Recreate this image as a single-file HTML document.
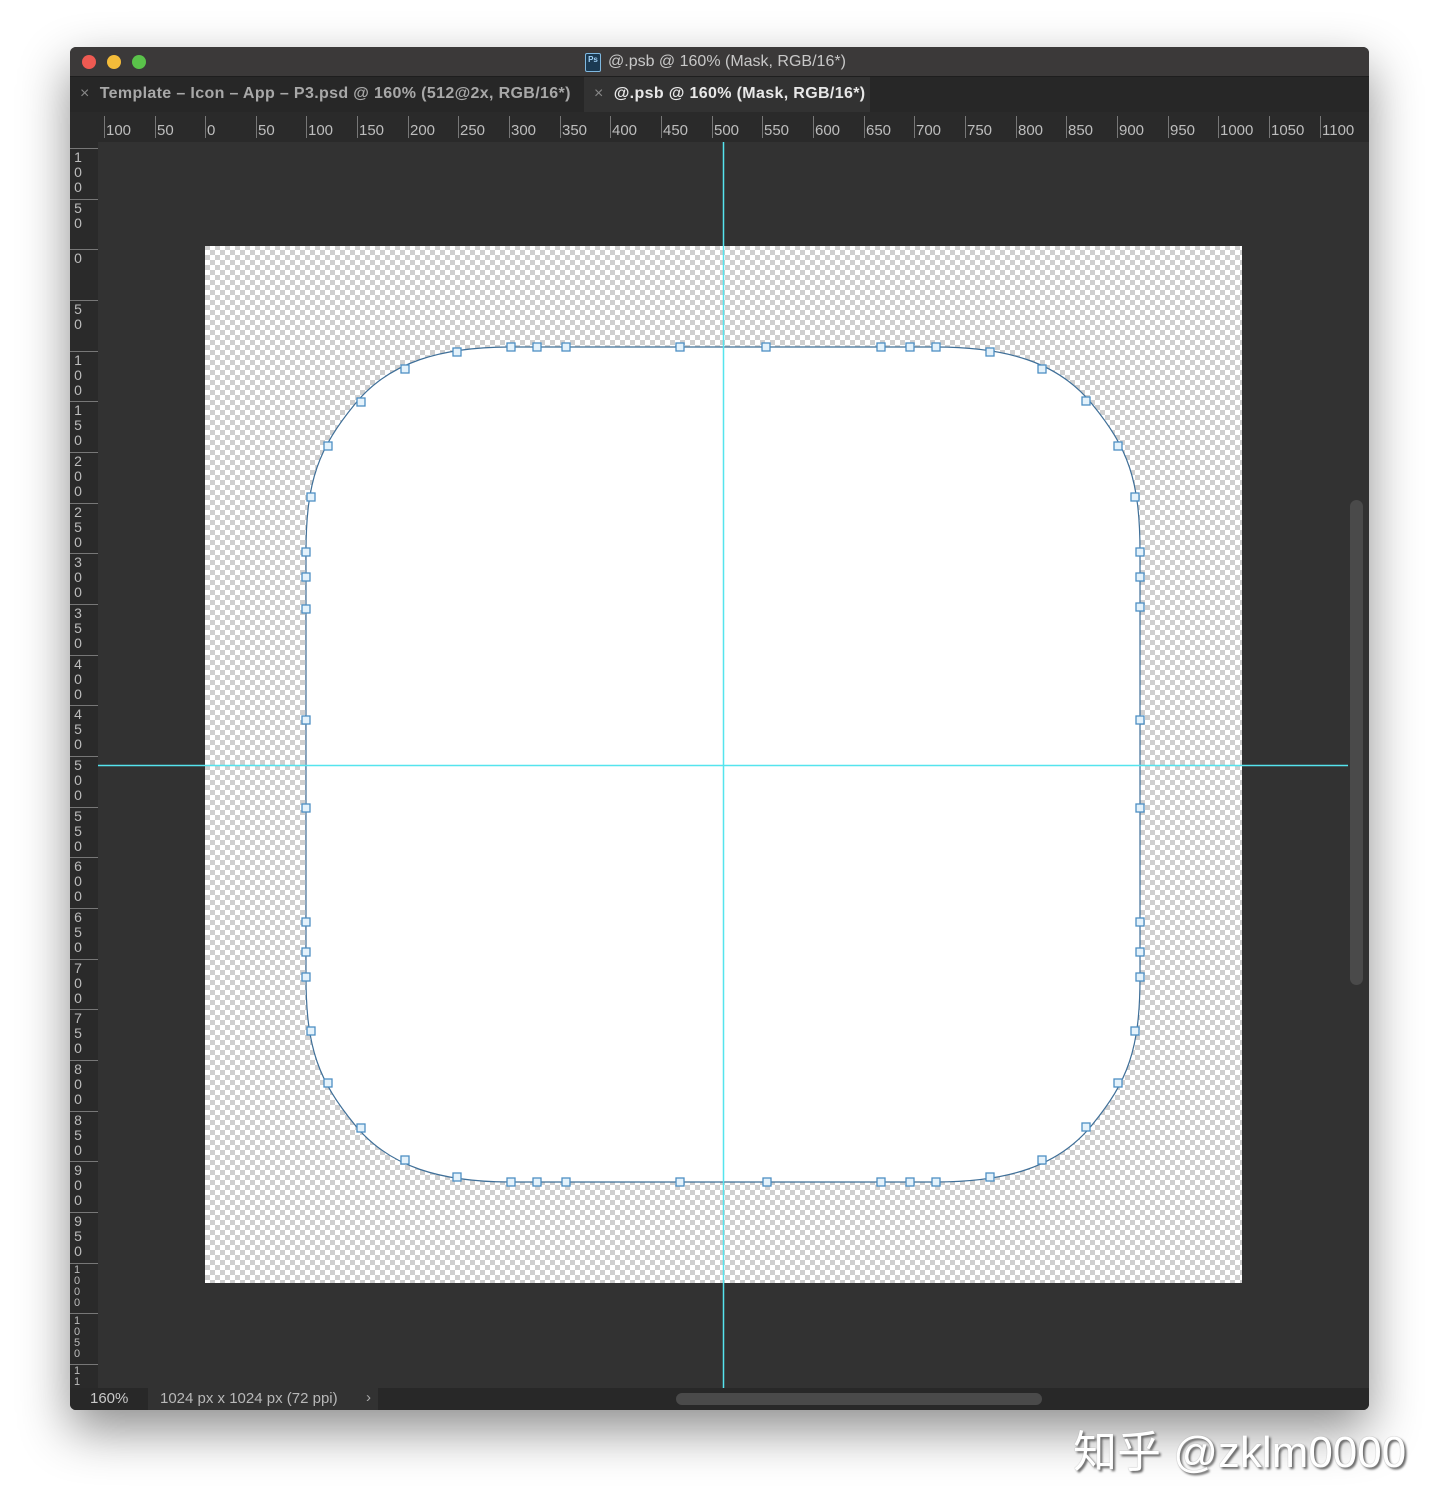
<!DOCTYPE html>
<html><head><meta charset="utf-8"><style>
body{margin:0;width:1440px;height:1504px;background:#fff;position:relative;overflow:hidden;font-family:"Liberation Sans",sans-serif}
.win{position:absolute;left:70px;top:47px;width:1299px;height:1363px;background:#323232;border-radius:6px;box-shadow:0 20px 50px rgba(0,0,0,.45);overflow:hidden}
.title{position:absolute;left:0;top:0;width:100%;height:29px;background:#3b3939;border-bottom:1px solid #1e1e1e}
.dot{position:absolute;top:8px;width:14px;height:14px;border-radius:50%}
.ttxt{position:absolute;left:538px;top:6px;color:#c8c8c8;font-size:16px}
.tabs{position:absolute;left:0;top:30px;width:100%;height:35px;background:#272727}
.tab{position:absolute;top:0;height:35px;line-height:33px;font-size:16px;font-weight:bold;color:#a8a8a8;white-space:nowrap;letter-spacing:0.35px}
.ruler{position:absolute;left:0;top:65px;width:100%;height:30px;background:#2a2a2a}
.lruler{position:absolute;left:0;top:95px;width:28px;height:1246px;background:#2a2a2a}
.status{position:absolute;left:0;bottom:0;width:100%;height:22px;background:#282828;color:#c8c8c8;font-size:15px}
</style></head><body>
<div class="win">
 <div class="title">
  <div class="dot" style="left:12px;background:#ee5a52"></div>
  <div class="dot" style="left:37px;background:#f4bc3a"></div>
  <div class="dot" style="left:62px;background:#5ac24a"></div>
  <div style="position:absolute;left:515px;top:6px;width:14px;height:17px;background:#1b3a52;border:1px solid #7fb8e0;border-radius:2px;color:#9fd0f5;font-size:8px;font-weight:bold;text-align:center;line-height:12px">Ps</div>
  <div class="ttxt">@.psb @ 160% (Mask, RGB/16*)</div>
 </div>
 <div class="tabs">
  <div class="tab" style="left:10px"><span style="font-weight:normal;color:#888;margin-right:10px">×</span>Template – Icon – App – P3.psd @ 160% (512@2x, RGB/16*)</div>
  <div class="tab" style="left:514px;width:286px;background:#323232;color:#e8e8e8;padding-left:10px;box-sizing:border-box"><span style="font-weight:normal;color:#888;margin-right:10px">×</span>@.psb @ 160% (Mask, RGB/16*)</div>
 </div>
 <div class="ruler"></div>
 <div class="lruler"></div>
 <div class="status"><span style="position:absolute;left:20px;top:2px">160%</span><div style="position:absolute;left:78px;top:0;width:230px;height:22px;background:#323232"></div><span style="position:absolute;left:90px;top:2px;color:#b8b8b8">1024 px x 1024 px (72 ppi)</span><span style="position:absolute;left:296px;top:1px;color:#aaa">›</span>
 <div style="position:absolute;left:606px;top:5px;width:366px;height:12px;border-radius:6px;background:#4a4a4a"></div></div>
 <div style="position:absolute;left:1280px;top:453px;width:13px;height:485px;border-radius:7px;background:#4a4a4a"></div>
</div>
<svg width="1440" height="1504" style="position:absolute;left:0;top:0">
<defs><pattern id="ck" width="10" height="10" patternUnits="userSpaceOnUse"><rect width="10" height="10" fill="#fff"/><rect width="5" height="5" fill="#cfcfcf"/><rect x="5" y="5" width="5" height="5" fill="#cfcfcf"/></pattern></defs>
<rect x="205" y="246" width="1037" height="1037" fill="url(#ck)"/>
<path d="M511,347 L936,347 C1006,347 1058,362 1092,404 C1128,448 1140,480 1140,552 L1140,977 C1140,1049 1128,1081 1092,1125 C1058,1167 1006,1182 936,1182 L511,1182 C441,1182 389,1167 355,1125 C319,1081 306,1049 306,977 L306,552 C306,480 319,448 355,404 C389,362 441,347 511,347 Z" fill="#fff" stroke="#3f6f98" stroke-width="1.2"/>
<line x1="723.5" y1="142" x2="723.5" y2="1388" stroke="#55e4ee" stroke-width="1.5"/>
<line x1="98" y1="765.5" x2="1348" y2="765.5" stroke="#55e4ee" stroke-width="1.5"/>
<g fill="#e4f2fb" stroke="#4d8fc4" stroke-width="1.3">
<rect x="453" y="348" width="8" height="8"/><rect x="507" y="343" width="8" height="8"/><rect x="533" y="343" width="8" height="8"/><rect x="562" y="343" width="8" height="8"/><rect x="676" y="343" width="8" height="8"/><rect x="762" y="343" width="8" height="8"/><rect x="877" y="343" width="8" height="8"/><rect x="906" y="343" width="8" height="8"/><rect x="932" y="343" width="8" height="8"/><rect x="986" y="348" width="8" height="8"/><rect x="1038" y="365" width="8" height="8"/><rect x="1082" y="397" width="8" height="8"/><rect x="1114" y="442" width="8" height="8"/><rect x="1131" y="493" width="8" height="8"/><rect x="1136" y="548" width="8" height="8"/><rect x="1136" y="573" width="8" height="8"/><rect x="1136" y="603" width="8" height="8"/><rect x="1136" y="716" width="8" height="8"/><rect x="1136" y="804" width="8" height="8"/><rect x="1136" y="918" width="8" height="8"/><rect x="1136" y="948" width="8" height="8"/><rect x="1136" y="973" width="8" height="8"/><rect x="1131" y="1027" width="8" height="8"/><rect x="1114" y="1079" width="8" height="8"/><rect x="1082" y="1123" width="8" height="8"/><rect x="1038" y="1156" width="8" height="8"/><rect x="986" y="1173" width="8" height="8"/><rect x="932" y="1178" width="8" height="8"/><rect x="906" y="1178" width="8" height="8"/><rect x="877" y="1178" width="8" height="8"/><rect x="763" y="1178" width="8" height="8"/><rect x="676" y="1178" width="8" height="8"/><rect x="562" y="1178" width="8" height="8"/><rect x="533" y="1178" width="8" height="8"/><rect x="507" y="1178" width="8" height="8"/><rect x="453" y="1173" width="8" height="8"/><rect x="401" y="1156" width="8" height="8"/><rect x="357" y="1124" width="8" height="8"/><rect x="324" y="1079" width="8" height="8"/><rect x="307" y="1027" width="8" height="8"/><rect x="302" y="973" width="8" height="8"/><rect x="302" y="948" width="8" height="8"/><rect x="302" y="918" width="8" height="8"/><rect x="302" y="804" width="8" height="8"/><rect x="302" y="716" width="8" height="8"/><rect x="302" y="605" width="8" height="8"/><rect x="302" y="573" width="8" height="8"/><rect x="302" y="548" width="8" height="8"/><rect x="307" y="493" width="8" height="8"/><rect x="324" y="442" width="8" height="8"/><rect x="357" y="398" width="8" height="8"/><rect x="401" y="365" width="8" height="8"/>
</g>
<g fill="#bdbdbd" font-family="Liberation Sans" font-size="15">
<text x="106" y="135">100</text><text x="157" y="135">50</text><text x="207" y="135">0</text><text x="258" y="135">50</text><text x="308" y="135">100</text><text x="359" y="135">150</text><text x="410" y="135">200</text><text x="460" y="135">250</text><text x="511" y="135">300</text><text x="562" y="135">350</text><text x="612" y="135">400</text><text x="663" y="135">450</text><text x="714" y="135">500</text><text x="764" y="135">550</text><text x="815" y="135">600</text><text x="866" y="135">650</text><text x="916" y="135">700</text><text x="967" y="135">750</text><text x="1018" y="135">800</text><text x="1068" y="135">850</text><text x="1119" y="135">900</text><text x="1170" y="135">950</text><text x="1220" y="135">1000</text><text x="1271" y="135">1050</text><text x="1322" y="135">1100</text>
</g>
<g stroke="#777" stroke-width="1">
<path d="M104.5 116V138M155.5 116V138M205.5 116V138M256.5 116V138M306.5 116V138M357.5 116V138M408.5 116V138M458.5 116V138M509.5 116V138M560.5 116V138M610.5 116V138M661.5 116V138M712.5 116V138M762.5 116V138M813.5 116V138M864.5 116V138M914.5 116V138M965.5 116V138M1016.5 116V138M1066.5 116V138M1117.5 116V138M1168.5 116V138M1218.5 116V138M1269.5 116V138M1320.5 116V138"/>
<path d="M70 148.5H98M70 199.5H98M70 249.5H98M70 300.5H98M70 351.5H98M70 401.5H98M70 452.5H98M70 503.5H98M70 553.5H98M70 604.5H98M70 655.5H98M70 705.5H98M70 756.5H98M70 807.5H98M70 857.5H98M70 908.5H98M70 959.5H98M70 1009.5H98M70 1060.5H98M70 1111.5H98M70 1161.5H98M70 1212.5H98M70 1263.5H98M70 1313.5H98M70 1364.5H98"/>
</g>
<g fill="#bdbdbd" font-family="Liberation Sans" font-size="14" text-anchor="middle">
<text x="78" y="162">1</text><text x="78" y="177">0</text><text x="78" y="192">0</text>
<text x="78" y="213">5</text><text x="78" y="228">0</text>
<text x="78" y="263">0</text>
<text x="78" y="314">5</text><text x="78" y="329">0</text>
<text x="78" y="365">1</text><text x="78" y="380">0</text><text x="78" y="395">0</text>
<text x="78" y="415">1</text><text x="78" y="430">5</text><text x="78" y="445">0</text>
<text x="78" y="466">2</text><text x="78" y="481">0</text><text x="78" y="496">0</text>
<text x="78" y="517">2</text><text x="78" y="532">5</text><text x="78" y="547">0</text>
<text x="78" y="567">3</text><text x="78" y="582">0</text><text x="78" y="597">0</text>
<text x="78" y="618">3</text><text x="78" y="633">5</text><text x="78" y="648">0</text>
<text x="78" y="669">4</text><text x="78" y="684">0</text><text x="78" y="699">0</text>
<text x="78" y="719">4</text><text x="78" y="734">5</text><text x="78" y="749">0</text>
<text x="78" y="770">5</text><text x="78" y="785">0</text><text x="78" y="800">0</text>
<text x="78" y="821">5</text><text x="78" y="836">5</text><text x="78" y="851">0</text>
<text x="78" y="871">6</text><text x="78" y="886">0</text><text x="78" y="901">0</text>
<text x="78" y="922">6</text><text x="78" y="937">5</text><text x="78" y="952">0</text>
<text x="78" y="973">7</text><text x="78" y="988">0</text><text x="78" y="1003">0</text>
<text x="78" y="1023">7</text><text x="78" y="1038">5</text><text x="78" y="1053">0</text>
<text x="78" y="1074">8</text><text x="78" y="1089">0</text><text x="78" y="1104">0</text>
<text x="78" y="1125">8</text><text x="78" y="1140">5</text><text x="78" y="1155">0</text>
<text x="78" y="1175">9</text><text x="78" y="1190">0</text><text x="78" y="1205">0</text>
<text x="78" y="1226">9</text><text x="78" y="1241">5</text><text x="78" y="1256">0</text>
<g font-size="11"><text x="77" y="1273">1</text><text x="77" y="1284">0</text><text x="77" y="1295">0</text><text x="77" y="1306">0</text>
<text x="77" y="1324">1</text><text x="77" y="1335">0</text><text x="77" y="1346">5</text><text x="77" y="1357">0</text>
<text x="77" y="1374">1</text><text x="77" y="1385">1</text></g>
</g>
</svg>
<div style="position:absolute;left:1073px;top:1416px;font-family:'Liberation Sans','Noto Sans CJK SC',sans-serif;font-size:44px;color:#fff;text-shadow:2px 2px 2px #666,0 0 1px #999;white-space:nowrap">知乎 @zklm0000</div>
</body></html>
